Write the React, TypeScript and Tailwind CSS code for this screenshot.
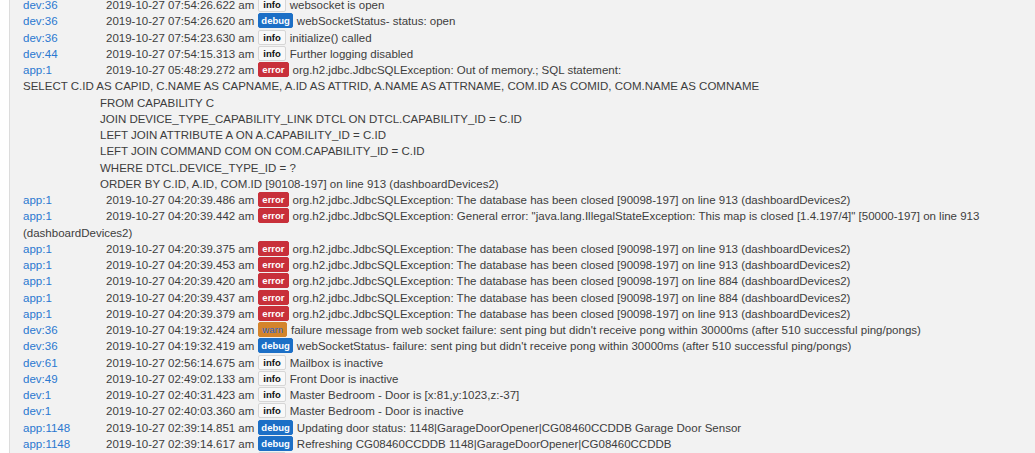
import React from 'react';

type Level = 'info' | 'debug' | 'error' | 'warn';

type Entry = {
  src: string;
  time: string;
  level: Level;
  msg: React.ReactNode;
};

const badgeClass: Record<Level, string> = {
  info: 'bg-[#f8f8f8] border border-[#d6d6d6] text-[#111] font-bold px-[4px]',
  debug: 'bg-[#1c6fc6] border border-[#1c6fc6] text-white font-bold px-[2px]',
  error: 'bg-[#c8303a] border border-[#c8303a] text-white font-bold px-[3px]',
  warn: 'bg-[#d4842c] border border-[#d4842c] text-[#2b66c7] px-[3px]',
};

function Badge({ level }: { level: Level }) {
  return (
    <span
      className={`inline-block h-[15px] rounded-[2px] align-top text-[9.5px] leading-[14px] ${badgeClass[level]}`}
    >
      {level}
    </span>
  );
}

const sqlLines = [
  'FROM CAPABILITY C',
  'JOIN DEVICE_TYPE_CAPABILITY_LINK DTCL ON DTCL.CAPABILITY_ID = C.ID',
  'LEFT JOIN ATTRIBUTE A ON A.CAPABILITY_ID = C.ID',
  'LEFT JOIN COMMAND COM ON COM.CAPABILITY_ID = C.ID',
  'WHERE DTCL.DEVICE_TYPE_ID = ?',
  'ORDER BY C.ID, A.ID, COM.ID [90108-197] on line 913 (dashboardDevices2)',
];

const closed = (line: number) =>
  `org.h2.jdbc.JdbcSQLException: The database has been closed [90098-197] on line ${line} (dashboardDevices2)`;

const top: Entry[] = [
  { src: 'dev:36', time: '2019-10-27 07:54:26.622 am', level: 'info', msg: 'websocket is open' },
  { src: 'dev:36', time: '2019-10-27 07:54:26.620 am', level: 'debug', msg: 'webSocketStatus- status: open' },
  { src: 'dev:36', time: '2019-10-27 07:54:23.630 am', level: 'info', msg: 'initialize() called' },
  { src: 'dev:44', time: '2019-10-27 07:54:15.313 am', level: 'info', msg: 'Further logging disabled' },
  {
    src: 'app:1',
    time: '2019-10-27 05:48:29.272 am',
    level: 'error',
    msg: 'org.h2.jdbc.JdbcSQLException: Out of memory.; SQL statement:',
  },
];

const rest: Entry[] = [
  { src: 'app:1', time: '2019-10-27 04:20:39.486 am', level: 'error', msg: closed(913) },
  {
    src: 'app:1',
    time: '2019-10-27 04:20:39.442 am',
    level: 'error',
    msg: (
      <>
        org.h2.jdbc.JdbcSQLException: General error: "java.lang.IllegalStateException: This map is closed
        [1.4.197/4]" [50000-197] on line 913
        <br />
        (dashboardDevices2)
      </>
    ),
  },
  { src: 'app:1', time: '2019-10-27 04:20:39.375 am', level: 'error', msg: closed(913) },
  { src: 'app:1', time: '2019-10-27 04:20:39.453 am', level: 'error', msg: closed(913) },
  { src: 'app:1', time: '2019-10-27 04:20:39.420 am', level: 'error', msg: closed(884) },
  { src: 'app:1', time: '2019-10-27 04:20:39.437 am', level: 'error', msg: closed(884) },
  { src: 'app:1', time: '2019-10-27 04:20:39.379 am', level: 'error', msg: closed(913) },
  {
    src: 'dev:36',
    time: '2019-10-27 04:19:32.424 am',
    level: 'warn',
    msg: "failure message from web socket failure: sent ping but didn't receive pong within 30000ms (after 510 successful ping/pongs)",
  },
  {
    src: 'dev:36',
    time: '2019-10-27 04:19:32.419 am',
    level: 'debug',
    msg: "webSocketStatus- failure: sent ping but didn't receive pong within 30000ms (after 510 successful ping/pongs)",
  },
  { src: 'dev:61', time: '2019-10-27 02:56:14.675 am', level: 'info', msg: 'Mailbox is inactive' },
  { src: 'dev:49', time: '2019-10-27 02:49:02.133 am', level: 'info', msg: 'Front Door is inactive' },
  { src: 'dev:1', time: '2019-10-27 02:40:31.423 am', level: 'info', msg: 'Master Bedroom - Door is [x:81,y:1023,z:-37]' },
  { src: 'dev:1', time: '2019-10-27 02:40:03.360 am', level: 'info', msg: 'Master Bedroom - Door is inactive' },
  {
    src: 'app:1148',
    time: '2019-10-27 02:39:14.851 am',
    level: 'debug',
    msg: 'Updating door status: 1148|GarageDoorOpener|CG08460CCDDB Garage Door Sensor',
  },
  {
    src: 'app:1148',
    time: '2019-10-27 02:39:14.617 am',
    level: 'debug',
    msg: 'Refreshing CG08460CCDDB 1148|GarageDoorOpener|CG08460CCDDB',
  },
  { src: 'app:1148', time: '2019-10-27 02:39:14.603 am', level: 'info', msg: 'Refreshing door status' },
];

function Row({ e }: { e: Entry }) {
  return (
    <div>
      <a className="inline-block w-[83px] text-[#2a78d0]">{e.src}</a>
      <span>{e.time}</span>
      <span className="ml-[4px]">
        <Badge level={e.level} />
      </span>
      <span className="ml-[4px]">{e.msg}</span>
    </div>
  );
}

export default function App() {
  return (
    <div className="flex h-[453px] w-[1035px] overflow-hidden bg-white font-['Liberation_Sans',Arial,sans-serif]">
      <div className="w-[10px] shrink-0 border-r border-[#dcdcdc] bg-white" />
      <main className="flex-1 bg-[#f2f2f2] pl-[13px] pr-2">
        <div className="-mt-[3px] text-[11.5px] leading-[16.25px] text-[#3d3d3d]">
          {top.map((e, i) => (
            <Row key={i} e={e} />
          ))}
          <div>
            SELECT C.ID AS CAPID, C.NAME AS CAPNAME, A.ID AS ATTRID, A.NAME AS ATTRNAME, COM.ID AS COMID, COM.NAME AS
            COMNAME
          </div>
          {sqlLines.map((l, i) => (
            <div key={i} className="pl-[77px]">
              {l}
            </div>
          ))}
          {rest.map((e, i) => (
            <Row key={i} e={e} />
          ))}
        </div>
      </main>
    </div>
  );
}
